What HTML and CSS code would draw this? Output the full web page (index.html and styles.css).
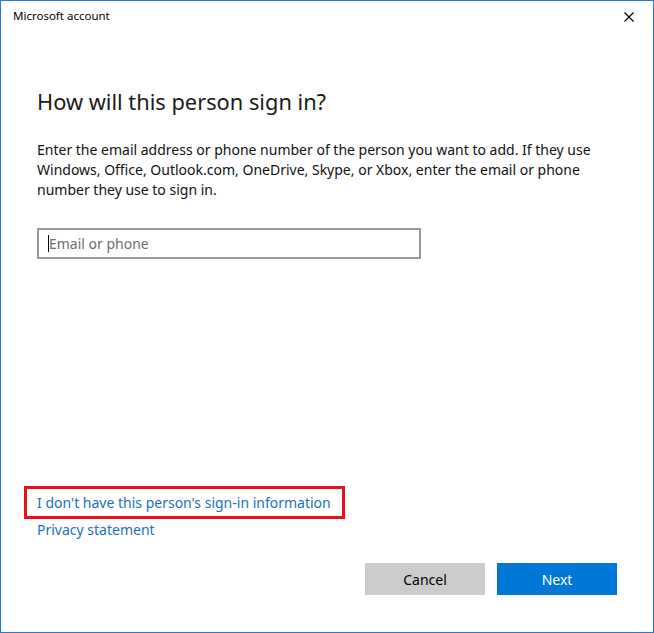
FILE: index.html
```html
<!DOCTYPE html>
<html lang="en">
  <head>
    <meta charset="UTF-8" />
    <meta name="viewport" content="width=device-width, initial-scale=1.0" />
    <title>Microsoft account</title>
    <link rel="stylesheet" href="styles.css">
  </head>
  <body>
    <div class="window">
      <div class="titlebar">
        <span class="title">Microsoft account</span>
        <button class="close" aria-label="Close">
          <svg width="10" height="10" viewBox="0 0 10 10">
            <path d="M0.5 0.5 L9.5 9.5 M9.5 0.5 L0.5 9.5" stroke="#000" stroke-width="1.1" fill="none" />
          </svg>
        </button>
      </div>
      <div class="content">
        <h1 class="heading">How will this person sign in?</h1>
        <p class="desc">
          Enter the email address or phone number of the person you want to add. If they use
          Windows, Office, Outlook.com, OneDrive, Skype, or Xbox, enter the email or phone
          number they use to sign in.
        </p>
        <div class="field">
          <span class="caret"></span>
          <input type="text" placeholder="Email or phone" />
        </div>
        <div class="links">
          <div class="highlight">
            <a href="#">I don't have this person's sign-in information</a>
          </div>
          <a href="#" class="privacy">Privacy statement</a>
        </div>
      </div>
      <div class="footer">
        <button class="btn cancel">Cancel</button>
        <button class="btn next">Next</button>
      </div>
    </div>
  </body>
</html>
```

FILE: styles.css
```css
body {
  margin: 0;
  font-family: "Noto Sans", "Open Sans", sans-serif;
  background: #fff;
}
.window {
  width: 654px;
  height: 633px;
  box-sizing: border-box;
  border: 1px solid #2b7bc9;
  display: flex;
  flex-direction: column;
  background: #fff;
}
.titlebar {
  height: 31px;
  display: flex;
  align-items: center;
  justify-content: space-between;
  padding-left: 12px;
}
.title {
  font-size: 11.5px;
  color: #000;
  margin-top: -2px;
}
.close {
  width: 46px;
  height: 31px;
  border: none;
  background: none;
  display: flex;
  align-items: center;
  justify-content: center;
  padding: 0;
  margin-right: 1px;
}
.content {
  flex: 1;
  display: flex;
  flex-direction: column;
  padding: 0 36px;
}
.heading {
  font-size: 21.8px;
  font-weight: 400;
  color: #1a1a1a;
  margin: 55px 0 0;
  line-height: 30px;
}
.desc {
  font-size: 14px;
  line-height: 20px;
  color: #111;
  margin: 23px 0 0;
}
.field {
  position: relative;
  width: 384px;
  height: 31px;
  margin-top: 28px;
}
.field input {
  width: 100%;
  height: 100%;
  box-sizing: border-box;
  border: 2px solid #999;
  padding: 0 10px;
  font-family: inherit;
  font-size: 14px;
  outline: none;
}
.field input::placeholder {
  color: #6e6e6e;
}
.caret {
  position: absolute;
  left: 11px;
  top: 7px;
  width: 1px;
  height: 17px;
  background: #000;
}
.links {
  margin-top: auto;
  display: flex;
  flex-direction: column;
  align-items: flex-start;
}
.links a {
  color: #1c6fc4;
  text-decoration: none;
  font-size: 14px;
  line-height: 20px;
}
.highlight {
  width: 321px;
  height: 33px;
  box-sizing: border-box;
  border: 3px solid #e8101c;
  margin-left: -13px;
  padding-left: 10px;
  display: flex;
  align-items: center;
}
.privacy {
  margin-top: 1px;
}
.footer {
  display: flex;
  justify-content: flex-end;
  gap: 12px;
  padding: 23px 36px 37px;
}
.btn {
  width: 120px;
  height: 32px;
  border: none;
  font-family: inherit;
  font-size: 14px;
  padding: 0;
}
.cancel {
  background: #ccc;
  color: #000;
}
.next {
  background: #0078d7;
  color: #fff;
}
```
